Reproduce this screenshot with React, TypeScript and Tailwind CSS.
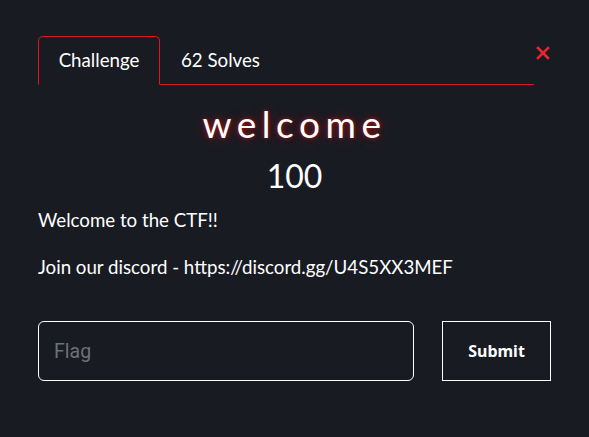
import React, { useState } from 'react';

const App: React.FC = () => {
    const [tab, setTab] = useState<'challenge' | 'solves'>('challenge');
    const [flag, setFlag] = useState('');

    return (
        <div className="min-h-screen w-full bg-[#191b23] font-['Lato','Noto_Sans',sans-serif] text-white">
            <div className="pl-[38px] pr-[38px] pt-9">
                {/* Tabs + close */}
                <div className="flex items-start">
                    <div className="flex flex-1 border-b border-[#e0161c]">
                        <button
                            onClick={() => setTab('challenge')}
                            className={`-mb-px h-[49px] w-[122px] rounded-t-[5px] border text-[18.7px] ${tab === 'challenge' ? 'border-[#e0161c] border-b-[#191b23]' : 'border-transparent'}`}
                        >
                            Challenge
                        </button>
                        <button
                            onClick={() => setTab('solves')}
                            className="-mb-px h-[49px] px-5 text-[18.7px] border border-transparent"
                        >
                            62 Solves
                        </button>
                    </div>
                    <button className="ml-[1px] mt-[9px] flex h-4 w-4 items-center justify-center" aria-label="close">
                        <svg width="14" height="14" viewBox="0 0 14 14">
                            <path d="M2 2 L12 12 M12 2 L2 12" stroke="#e8262c" strokeWidth="2.6" strokeLinecap="square" />
                        </svg>
                    </button>
                </div>

                {/* Title */}
                <div className="mt-[17px] text-center">
                    <h2 className="text-[37px] leading-[44px] tracking-[0.15em] [text-shadow:0_0_4px_rgba(200,20,20,0.8),0_0_12px_rgba(160,20,20,0.6)]">welcome</h2>
                    <h3 className="mt-[10px] text-[32px] leading-[40px]">100</h3>
                </div>

                <div className="mt-[12px] text-[18.7px] leading-[24px]">
                    <p>Welcome to the CTF!!</p>
                    <p className="mt-[23px]">Join our discord - https://discord.gg/U4S5XX3MEF</p>
                </div>

                {/* Flag form */}
                <form
                    className="mt-[42px] flex items-center"
                    onSubmit={e => e.preventDefault()}
                >
                    <input
                        type="text"
                        placeholder="Flag"
                        value={flag}
                        onChange={e => setFlag(e.target.value)}
                        className="h-[60px] w-[376px] rounded-[6px] border border-white bg-transparent px-[15px] font-['Roboto',sans-serif] text-[19.5px] text-white outline-none placeholder:text-[#6c717a]"
                    />
                    <button
                        type="submit"
                        className="ml-[28px] h-[60px] w-[109px] border border-white text-[16px] font-bold font-['Noto_Sans',sans-serif]"
                    >
                        Submit
                    </button>
                </form>
            </div>
        </div>
    );
};

export default App;
